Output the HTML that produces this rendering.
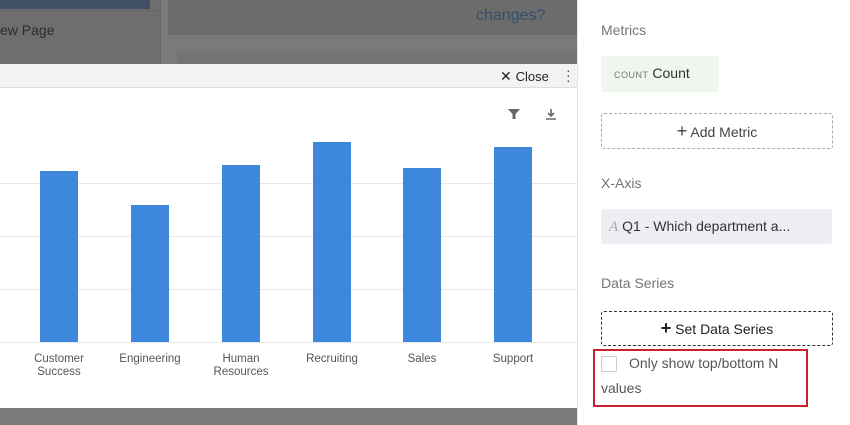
<html><head><style>
body{margin:0;width:850px;height:425px;position:relative;overflow:hidden;font-family:"Liberation Sans",sans-serif;background:#7a7a7a}
.a{position:absolute}
.lbl{font-size:11.5px;color:#555;text-align:center;line-height:13px}
.bar{position:absolute;background:#3d88dd;width:38px}
.grid{position:absolute;left:0;width:577px;height:1px;background:#e8e8e8}
.side{color:#757575;font-size:14px}
</style></head><body>
<div class="a" style="left:0;top:0;width:160px;height:64px;background:#6e6e6e"></div>
<div class="a" style="left:0;top:0;width:150px;height:9px;background:#3f5163"></div>
<div class="a" style="left:0;top:10px;width:160px;height:1px;background:#666"></div>
<div class="a" style="left:0;top:22px;font-size:14px;color:#2b2b2b">ew Page</div>
<div class="a" style="left:160px;top:0;width:1px;height:64px;background:#666"></div>
<div class="a" style="left:168px;top:0;width:409px;height:35px;background:#6c6c6c"></div>
<div class="a" style="left:476px;top:7px;font-size:16px;color:#34506b">changes?</div>
<div class="a" style="left:177px;top:51px;width:400px;height:14px;background:#747474"></div>
<div class="a" style="left:0;top:64px;width:577px;height:23px;background:#f3f3f6;border-bottom:1px solid #ddd"></div>
<div class="a" style="left:500px;top:68px;font-size:14px;color:#222">✕ <span style="font-size:13px">Close</span></div>
<div class="a" style="left:566px;top:68px;font-size:14px;color:#444;line-height:5px">·<br>·<br>·</div>
<div class="a" style="left:0;top:88px;width:577px;height:320px;background:#fff"></div>
<svg class="a" style="left:508px;top:108px" width="12" height="12"><path d="M0 1H12L7.5 6V11H4.5V6Z" fill="#666"/></svg>
<svg class="a" style="left:545px;top:108px" width="12" height="14"><path d="M6 1V8M3 5L6 8L9 5M1 11H11" stroke="#666" stroke-width="1.6" fill="none"/></svg>
<div class="grid" style="top:183px"></div><div class="grid" style="top:236px"></div><div class="grid" style="top:289px"></div><div class="grid" style="top:342px"></div>
<div class="bar" style="left:40px;top:171px;height:171px"></div>
<div class="bar" style="left:131px;top:205px;height:137px"></div>
<div class="bar" style="left:222px;top:165px;height:177px"></div>
<div class="bar" style="left:313px;top:142px;height:200px"></div>
<div class="bar" style="left:403px;top:168px;height:174px"></div>
<div class="bar" style="left:494px;top:147px;height:195px"></div>
<div class="a lbl" style="left:19px;top:353px;width:80px">Customer<br>Success</div>
<div class="a lbl" style="left:110px;top:353px;width:80px">Engineering</div>
<div class="a lbl" style="left:201px;top:353px;width:80px">Human<br>Resources</div>
<div class="a lbl" style="left:292px;top:353px;width:80px">Recruiting</div>
<div class="a lbl" style="left:382px;top:353px;width:80px">Sales</div>
<div class="a lbl" style="left:473px;top:353px;width:80px">Support</div>
<div class="a" style="left:577px;top:0;width:273px;height:425px;background:#fff;border-left:1px solid #e4e4e4"></div>
<div class="a side" style="left:601px;top:22px">Metrics</div>
<div class="a" style="left:601px;top:56px;width:118px;height:36px;background:#eef6ee;border-radius:3px"></div>
<div class="a" style="left:614px;top:65px;font-size:14px;color:#333"><span style="font-size:9px;color:#777;letter-spacing:.5px">COUNT</span> Count</div>
<div class="a" style="left:601px;top:113px;width:230px;height:34px;border:1px dashed #aaa;border-radius:3px;text-align:center;line-height:34px;font-size:14px;color:#444"><b style="font-size:18px;font-weight:normal">+</b> Add Metric</div>
<div class="a side" style="left:601px;top:175px">X-Axis</div>
<div class="a" style="left:601px;top:209px;width:231px;height:35px;background:#eceef3;border-radius:3px;line-height:35px;font-size:14px;color:#333"><i style="font-family:'Liberation Serif';color:#aaa;margin:0 4px 0 8px;font-size:15px">A</i>Q1 - Which department a...</div>
<div class="a side" style="left:601px;top:275px">Data Series</div>
<div class="a" style="left:601px;top:311px;width:230px;height:33px;border:1px dashed #333;border-radius:3px;text-align:center;line-height:33px;font-size:14px;color:#222"><b style="font-size:18px">+</b> Set Data Series</div>
<div class="a" style="left:593px;top:349px;width:211px;height:54px;border:2px solid #c5212f"></div>
<div class="a" style="left:601px;top:356px;width:14px;height:14px;border:1px solid #ccc;border-radius:2px"></div>
<div class="a" style="left:629px;top:355px;font-size:14px;color:#555">Only show top/bottom N</div>
<div class="a" style="left:601px;top:380px;font-size:14px;color:#555">values</div>
</body></html>
